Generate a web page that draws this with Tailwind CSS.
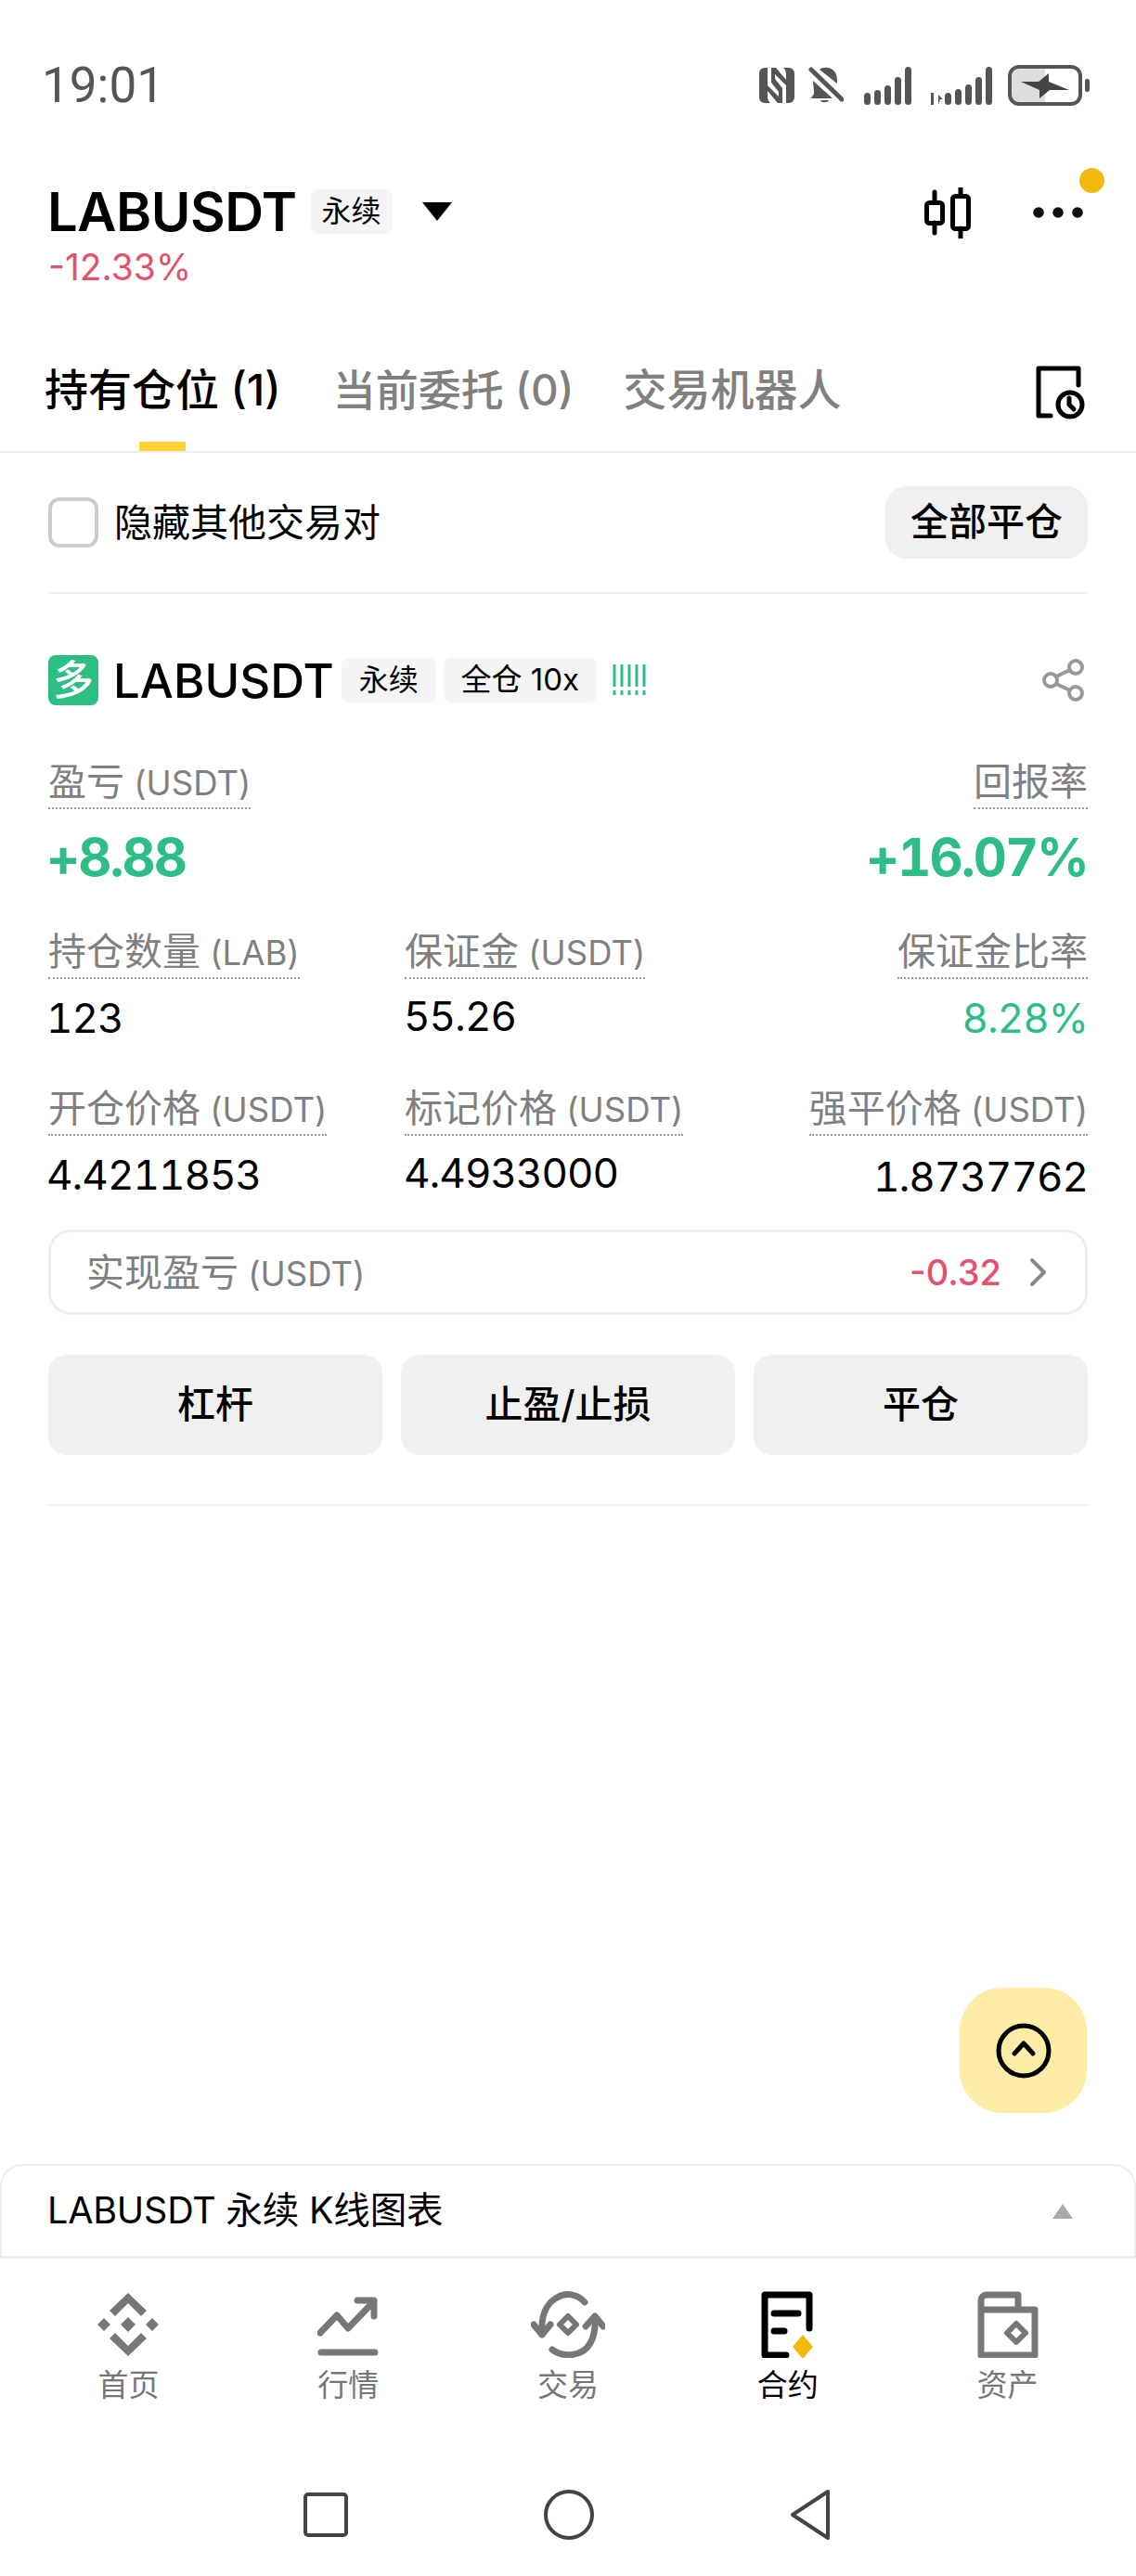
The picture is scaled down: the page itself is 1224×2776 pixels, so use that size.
<!DOCTYPE html>
<html lang="zh-CN">
<head>
    <meta charset="UTF-8">
    <meta name="viewport" content="width=device-width, initial-scale=1.0">
    <title>LABUSDT 持有仓位</title>
    <script src="https://cdn.jsdelivr.net/npm/@tailwindcss/browser@4"></script>
</head>
<body class="bg-white">
<div class="relative flex flex-col w-[1224px] h-[2776px] overflow-hidden bg-white text-black font-['Inter','Noto_Sans_CJK_SC',sans-serif]">

    <!-- Status bar -->
    <div class="flex items-center h-[184px] shrink-0 pl-[45px] pr-[50px]">
        <span class="text-[53px] leading-none text-[#555] font-['Roboto',sans-serif] font-normal">19:01</span>
        <div class="ml-auto flex items-center">
            <svg width="38" height="40" viewBox="0 0 38 40" fill="#555"><path d="M9 1H6a6 6 0 0 0-6 6v26a6 6 0 0 0 6 6h6a9 9 0 0 1-3-7zM29 39h3a6 6 0 0 0 6-6V7a6 6 0 0 0-6-6h-6a9 9 0 0 1 3 7zM13 1h5l11 13v6L17 8v5l8 10v6L13 15zM25 39h-5L9 26v-6l12 12v-5L13 17v-6l12 14z"/></svg>
            <svg class="ml-[15px]" width="38" height="40" viewBox="0 0 38 40" fill="#555"><path d="M12 3c4-3 11-3 15 1 4 3 4 9 4 14l-19-15zM5 15l21 19H3c0-2 3-3 3-6 0-4-1-9-1-13zM13 36h9c0 3-9 3-9 0z"/><path d="M3 3l33 32" stroke="#555" stroke-width="5" stroke-linecap="round"/></svg>
            <svg class="ml-[22px]" width="53" height="41" viewBox="0 0 53 41" fill="#555"><rect x="0" y="28" width="7" height="13" rx="3.5"/><rect x="11" y="25" width="7" height="16" rx="3.5"/><rect x="22" y="20" width="7" height="21" rx="3.5"/><rect x="33" y="11" width="7" height="30" rx="3.5"/><rect x="44" y="0" width="7" height="41" rx="3.5"/></svg>
            <svg class="ml-[14px]" width="73" height="41" viewBox="0 0 73 41" fill="#555"><path d="M0 33l5-5v13h3V28l0 0h-3zM13 41V30l5 5h-3z"/><rect x="20" y="28" width="7" height="13" rx="3.5"/><rect x="31" y="24" width="7" height="17" rx="3.5"/><rect x="42" y="19" width="7" height="22" rx="3.5"/><rect x="53" y="11" width="7" height="30" rx="3.5"/><rect x="64" y="0" width="7" height="41" rx="3.5"/></svg>
            <svg class="ml-[15px]" width="88" height="44" viewBox="0 0 88 44"><path d="M10 3h30v38H10a7 7 0 0 1-7-7V10a7 7 0 0 1 7-7z" fill="#ddd"/><rect x="2" y="2" width="76" height="40" rx="10" fill="none" stroke="#555" stroke-width="4"/><path d="M14 18h19l11-9 0 9 22 9H45l-11 9 0-9z" fill="#444"/><rect x="83" y="15" width="5" height="14" rx="2" fill="#555"/></svg>
        </div>
    </div>

    <!-- Symbol header -->
    <div class="relative shrink-0 h-[128px] pl-[51px] pr-[52px]">
        <div class="flex items-center h-[64px] mt-[12px]">
            <span class="text-[58px] leading-[64px] font-semibold tracking-[-0.5px]">LABUSDT</span>
            <span class="ml-[15px] w-[88px] h-[48px] flex items-center justify-center rounded-[8px] bg-[#f5f5f5] text-[32px]">永续</span>
            <svg class="ml-[32px]" width="32" height="20" viewBox="0 0 32 20" fill="#000"><path d="M0 0h32L16 20z"/></svg>
            <svg class="ml-auto mt-[3px]" width="50" height="55" viewBox="0 0 50 55" fill="none" stroke="#000" stroke-width="5"><path d="M11 5v11M11 38v11M39 0v9M39 44v11" stroke-linecap="round"/><rect x="2.5" y="16.5" width="17" height="22" rx="3"/><rect x="30.5" y="9.5" width="17" height="35" rx="3"/></svg>
            <svg class="ml-[67px] mr-[5px] mt-[2px]" width="54" height="12" viewBox="0 0 54 12" fill="#111"><circle cx="6" cy="6" r="5.8"/><circle cx="27" cy="6" r="5.8"/><circle cx="48" cy="6" r="5.8"/></svg>
        </div>
        <div class="text-[39px] leading-[48px] mt-[4px] pl-[1px] text-[#e4506d]">-12.33%</div>
        <span class="absolute left-[1163px] top-[-3px] w-[27px] h-[27px] rounded-full bg-[#f0b90b]"></span>
    </div>

    <!-- Tabs -->
    <div class="relative flex shrink-0 h-[176px] pt-[78px] pl-[48px] pr-[53px] border-b-2 border-[#eee]">
        <span class="text-[47px] leading-[60px] font-medium">持有仓位 (1)</span>
        <span class="ml-[56px] text-[46px] leading-[60px] text-[#808080] font-medium">当前委托 (0)</span>
        <span class="ml-[53px] text-[47px] leading-[60px] text-[#808080] font-medium">交易机器人</span>
        <svg class="ml-auto mt-[2px]" width="58" height="60" viewBox="0 0 58 60" fill="none" stroke="#000" stroke-width="5" stroke-linecap="round" stroke-linejoin="round"><path d="M19 56H6V5h43v18"/><circle cx="40" cy="44" r="13"/><path d="M39 37v7l5 5"/></svg>
        <span class="absolute left-[150px] bottom-0 w-[50px] h-[10px] bg-[#fcd535]"></span>
    </div>

    <!-- Filter row -->
    <div class="flex items-center shrink-0 h-[152px] mx-[52px] border-b-2 border-[#eee]">
        <span class="w-[54px] h-[54px] rounded-[12px] border-[4px] border-[#ccc]"></span>
        <span class="ml-[17px] text-[41px] leading-none">隐藏其他交易对</span>
        <span class="ml-auto flex items-center justify-center w-[218px] h-[78px] rounded-[22px] bg-[#f0f0f0] text-[41px] font-medium">全部平仓</span>
    </div>

    <!-- Position card -->
    <div class="flex flex-col shrink-0 px-[52px] pt-[66px]">
        <div class="flex items-center h-[54px]">
            <span class="flex items-center justify-center w-[54px] h-[54px] rounded-[8px] bg-[#2ebd85] text-white text-[44px] font-medium">多</span>
            <span class="ml-[16px] text-[51px] leading-none font-medium">LABUSDT</span>
            <span class="ml-[8px] flex items-center justify-center w-[102px] h-[48px] rounded-[8px] bg-[#f5f5f5] text-[32px]">永续</span>
            <span class="ml-[8px] flex items-center justify-center w-[165px] h-[48px] rounded-[8px] bg-[#f5f5f5] text-[33px]">全仓 10x</span>
            <svg class="ml-[17px]" width="36" height="34" viewBox="0 0 36 34" stroke="#2ebd85" stroke-width="3"><path d="M2 0v24M2 28v5M10 0v24M10 28v5M18 0v24M18 28v5M26 0v24M26 28v5M34 0v24M34 28v5"/></svg>
            <svg class="ml-auto mr-[3px]" width="46" height="46" viewBox="0 0 46 46" fill="none" stroke="#999" stroke-width="4"><circle cx="9" cy="23" r="7"/><circle cx="36" cy="9" r="7"/><circle cx="36" cy="37" r="7"/><path d="M15 19l15-7M15 27l15 7"/></svg>
        </div>

        <div class="flex justify-between mt-[58px]">
            <span class="text-[41px] leading-[48px] pb-[4px] text-[#808080] border-b-2 border-dotted border-[#999]">盈亏<span class="text-[36.5px] leading-none"> (USDT)</span></span>
            <span class="text-[41px] leading-[48px] pb-[4px] text-[#808080] border-b-2 border-dotted border-[#999]">回报率</span>
        </div>
        <div class="flex justify-between mt-[20px] text-[56px] leading-[64px] font-bold tabular-nums tracking-[-2px] text-[#2ebd85]">
            <span class="-ml-[2px]">+8.88</span>
            <span>+16.07%</span>
        </div>

        <div class="grid grid-cols-[384px_1fr_auto] mt-[45px]">
            <div class="flex flex-col items-start">
                <span class="text-[41px] leading-[48px] pb-[4px] text-[#808080] border-b-2 border-dotted border-[#999]">持仓数量<span class="text-[36.5px] leading-none"> (LAB)</span></span>
                <span class="mt-[14px] -ml-[2px] text-[44px] leading-[56px] tabular-nums tracking-[-1px]">123</span>
            </div>
            <div class="flex flex-col items-start">
                <span class="text-[41px] leading-[48px] pb-[4px] text-[#808080] border-b-2 border-dotted border-[#999]">保证金<span class="text-[36.5px] leading-none"> (USDT)</span></span>
                <span class="mt-[12px] -ml-[1px] text-[44px] leading-[56px] tabular-nums tracking-[-1px]">55.26</span>
            </div>
            <div class="flex flex-col items-end">
                <span class="text-[41px] leading-[48px] pb-[4px] text-[#808080] border-b-2 border-dotted border-[#999]">保证金比率</span>
                <span class="mt-[14px] text-[44px] leading-[56px] tabular-nums tracking-[-1px] text-[#2ebd85]">8.28%</span>
            </div>
        </div>

        <div class="grid grid-cols-[384px_1fr_auto] mt-[45px]">
            <div class="flex flex-col items-start">
                <span class="text-[41px] leading-[48px] pb-[4px] text-[#808080] border-b-2 border-dotted border-[#999]">开仓价格<span class="text-[36.5px] leading-none"> (USDT)</span></span>
                <span class="mt-[14px] -ml-[2px] text-[44px] leading-[56px] tabular-nums tracking-[-1px]">4.4211853</span>
            </div>
            <div class="flex flex-col items-start">
                <span class="text-[41px] leading-[48px] pb-[4px] text-[#808080] border-b-2 border-dotted border-[#999]">标记价格<span class="text-[36.5px] leading-none"> (USDT)</span></span>
                <span class="mt-[12px] -ml-[1px] text-[44px] leading-[56px] tabular-nums tracking-[-1px]">4.4933000</span>
            </div>
            <div class="flex flex-col items-end">
                <span class="text-[41px] leading-[48px] pb-[4px] text-[#808080] border-b-2 border-dotted border-[#999]">强平价格<span class="text-[36.5px] leading-none"> (USDT)</span></span>
                <span class="mt-[16px] text-[44px] leading-[56px] tabular-nums tracking-[-1px]">1.8737762</span>
            </div>
        </div>

        <div class="flex items-center h-[92px] mt-[29px] pl-[38px] pr-[40px] rounded-[24px] border-[3px] border-[#eee]">
            <span class="text-[41px] leading-none text-[#808080]">实现盈亏<span class="text-[36.5px] leading-none"> (USDT)</span></span>
            <span class="ml-auto text-[38px] leading-none font-medium text-[#e4506d]">-0.32</span>
            <svg class="ml-[30px]" width="20" height="32" viewBox="0 0 20 32" fill="none" stroke="#888" stroke-width="4" stroke-linecap="round" stroke-linejoin="round"><path d="M3 3l13 13L3 29"/></svg>
        </div>

        <div class="grid grid-cols-3 gap-[20px] mt-[43px]">
            <span class="flex items-center justify-center h-[108px] rounded-[20px] bg-[#f0f0f0] text-[41px] font-medium">杠杆</span>
            <span class="flex items-center justify-center h-[108px] rounded-[20px] bg-[#f0f0f0] text-[41px] font-medium">止盈/止损</span>
            <span class="flex items-center justify-center h-[108px] rounded-[20px] bg-[#f0f0f0] text-[41px] font-medium">平仓</span>
        </div>
        <div class="mt-[53px] border-b-2 border-[#f3f3f3]"></div>
    </div>

    <div class="flex-1"></div>

    <!-- Scroll to top button -->
    <div class="absolute left-[1034px] top-[2142px] flex items-center justify-center w-[137px] h-[135px] rounded-[46px] bg-[#fdeca6]">
        <svg width="60" height="60" viewBox="0 0 60 60" fill="none" stroke="#000" stroke-width="5" stroke-linecap="round" stroke-linejoin="round"><circle cx="30" cy="30" r="27"/><path d="M20 33l10-11 10 11"/></svg>
    </div>

    <!-- K line drawer -->
    <div class="flex items-center shrink-0 h-[102px] pl-[49px] pr-[66px] rounded-t-[24px] border-x-2 border-t-2 border-b-[3px] border-[#f0f0f0]">
        <span class="text-[39.5px] leading-none tracking-[-0.2px]">LABUSDT 永续 K线图表</span>
        <svg class="ml-auto" width="22" height="16" viewBox="0 0 22 16" fill="#aaa"><path d="M11 0l11 16H0z"/></svg>
    </div>

    <!-- Bottom navigation -->
    <div class="grid grid-cols-5 shrink-0 h-[235px] pt-[35px] px-[20px] text-[33px] leading-[44px] text-[#777]">
        <div class="flex flex-col items-center">
            <svg class="h-[72px]" width="66" height="68" viewBox="0 0 66 68" fill="#777"><path d="M33 0l20 19-6 6-14-14-14 14-6-6zM33 68l20-19-6-6-14 14-14-14-6 6zM33 26l8 8-8 8-8-8zM7 27l7 7-7 7-7-7zM59 27l7 7-7 7-7-7z"/></svg>
            <span class="mt-[7px]">首页</span>
        </div>
        <div class="flex flex-col items-center">
            <svg class="h-[72px]" width="66" height="68" viewBox="0 0 66 68" fill="none" stroke="#777" stroke-width="7" stroke-linecap="round" stroke-linejoin="round"><path d="M3 43l18-19 12 14 27-28M43 8h18v17"/><path d="M4 64h58"/></svg>
            <span class="mt-[7px]">行情</span>
        </div>
        <div class="flex flex-col items-center">
            <svg class="h-[72px]" width="80" height="72" viewBox="0 0 80 72" fill="none" stroke="#777" stroke-width="7" stroke-linecap="round" stroke-linejoin="round"><path d="M58 12C50 3 38 1 28 7 17 13 11 26 12 44"/><path d="M3 36l9 11 9-11"/><path d="M23 63c9 7 23 8 34 1 9-7 13-20 12-36"/><path d="M59 38l10-11 9 11"/><path d="M40 27l9 9-9 9-9-9z" stroke-width="6"/></svg>
            <span class="mt-[7px]">交易</span>
        </div>
        <div class="flex flex-col items-center text-black">
            <svg class="h-[72px]" width="58" height="72" viewBox="0 0 58 72" fill="none" stroke="#000" stroke-width="7" stroke-linecap="round" stroke-linejoin="round"><path d="M52 40V4H4v65h23"/><path d="M14 24h26M14 43h11"/><path d="M45 47l11 13-11 13-11-13z" fill="#f0b90b" stroke="none"/></svg>
            <span class="mt-[7px]">合约</span>
        </div>
        <div class="flex flex-col items-center">
            <svg class="h-[72px]" width="66" height="72" viewBox="0 0 66 72" fill="none" stroke="#777" stroke-width="7" stroke-linecap="round" stroke-linejoin="round"><path d="M4 10a6 6 0 0 1 6-6h34v16h18v49H4zM4 20h40"/><path d="M42 35l10 10-10 10-10-10z" stroke-width="6"/></svg>
            <span class="mt-[7px]">资产</span>
        </div>
    </div>

    <!-- System navigation -->
    <div class="flex items-center justify-center gap-[211px] shrink-0 h-[107px] pb-[26px] pr-[2px]">
        <svg width="48" height="48" viewBox="0 0 48 48" fill="none" stroke="#444" stroke-width="4"><rect x="2" y="2" width="44" height="44" rx="3"/></svg>
        <svg width="54" height="54" viewBox="0 0 54 54" fill="none" stroke="#444" stroke-width="4"><circle cx="27" cy="27" r="25"/></svg>
        <svg width="44" height="54" viewBox="0 0 44 54" fill="none" stroke="#444" stroke-width="4" stroke-linejoin="round"><path d="M41 2v50L3 27z"/></svg>
    </div>
</div>
</body>
</html>
